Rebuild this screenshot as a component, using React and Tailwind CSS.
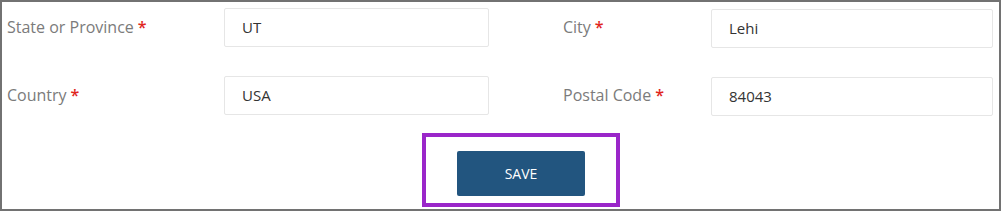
export default function App() {
  const font = { fontFamily: '"Open Sans", "Liberation Sans", sans-serif' };
  const Label = ({ text, className }) => (
    <div className={`h-[39px] flex items-center text-[16px] text-[#7b7b7b] ${className}`}>
      {text}
      <span className="ml-[4px] text-[#e0261e] font-semibold">*</span>
    </div>
  );
  const Input = ({ value, className }) => (
    <div
      className={`h-[39px] flex items-center pl-[17px] border border-[#e6e6e6] rounded-[2px] text-[15px] text-[#333333] ${className}`}
    >
      {value}
    </div>
  );
  const Row = ({ l, lv, r, rv }) => (
    <div className="flex items-start h-[40px]">
      <Label text={l} className="w-[222px] pl-[5px] -mt-[1px]" />
      <Input value={lv} className="w-[265px]" />
      <div className="w-[74px]" />
      <Label text={r} className="w-[148px] -mt-[1px]" />
      <Input value={rv} className="w-[282px] mt-[1px]" />
    </div>
  );
  return (
    <div className="bg-white w-[1003px] h-[216px]" style={font}>
      <div className="w-[1001px] h-[211px] border-2 border-[#727272] bg-white flex flex-col">
        <div className="flex flex-col gap-[28px] pt-[6px]">
          <Row l="State or Province" lv="UT" r="City" rv="Lehi" />
          <Row l="Country" lv="USA" r="Postal Code" rv="84043" />
        </div>
        <div className="mt-[17px] ml-[420px] w-[198px] h-[74px] border-[4px] border-[#9a26c9] pt-[14px] pl-[31px]">
          <button className="w-[128px] h-[45px] bg-[#22557f] text-white text-[14px] rounded-[2px] flex items-center justify-center">
            SAVE
          </button>
        </div>
      </div>
    </div>
  );
}
